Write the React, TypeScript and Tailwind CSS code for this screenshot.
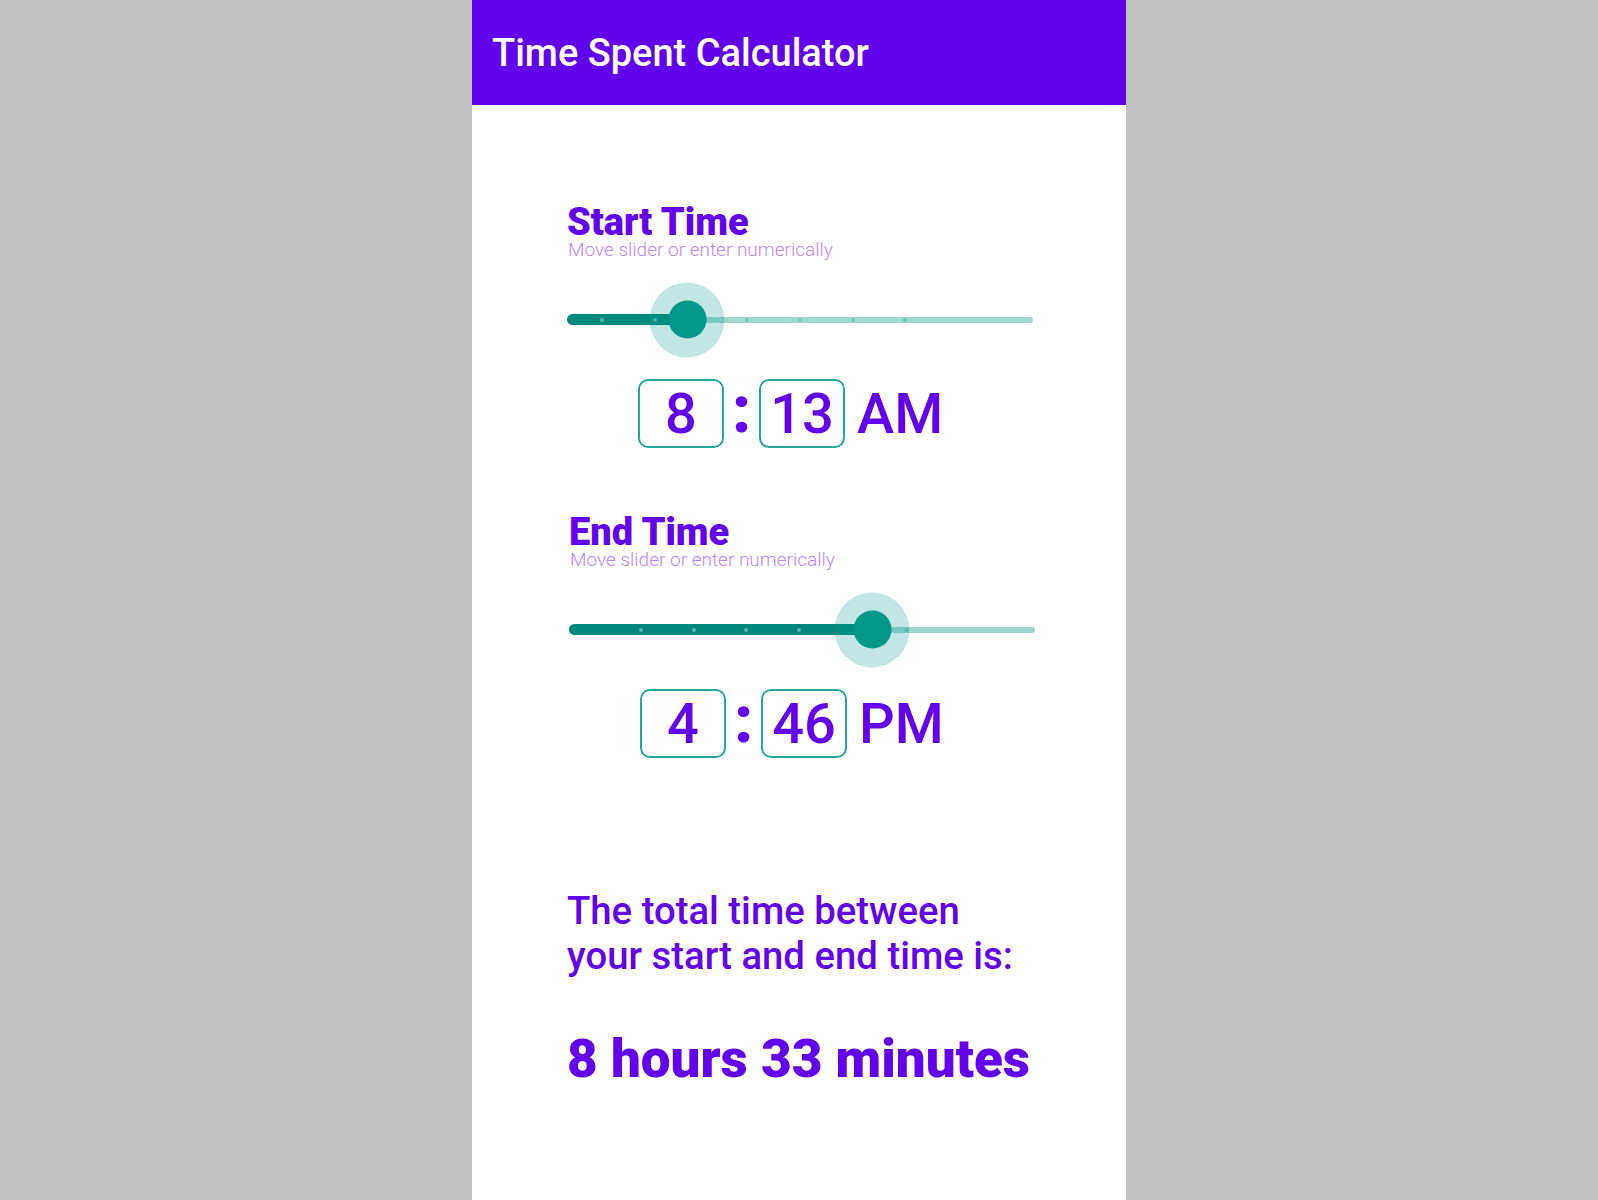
import React from 'react';

type SliderProps = {
  thumb: number; // px from track start
  activeDots: number[];
  inactiveDots: number[];
};

const Slider: React.FC<SliderProps> = ({ thumb, activeDots, inactiveDots }) => {
  return (
    <div className="relative h-[75px] w-[466px] flex items-center">
      {/* track */}
      <div className="flex items-center w-full">
        <div className="h-[11px] bg-[#00897b] rounded-l-full" style={{ width: thumb }}></div>
        <div className="h-[6px] flex-1 bg-[rgba(0,150,136,0.38)] rounded-r-full"></div>
      </div>

      {/* tick marks */}
      {activeDots.map((d) => (
        <div
          key={'a' + d}
          className="absolute top-1/2 -translate-y-1/2 -translate-x-1/2 w-[4px] h-[4px] rounded-full bg-[#62b6ad]"
          style={{ left: d }}
        ></div>
      ))}
      {inactiveDots.map((d) => (
        <div
          key={'i' + d}
          className="absolute top-1/2 -translate-y-1/2 -translate-x-1/2 w-[4px] h-[4px] rounded-full bg-[#6cc3bb]"
          style={{ left: d }}
        ></div>
      ))}

      {/* halo + thumb */}
      <div
        className="absolute top-1/2 -translate-y-1/2 -translate-x-1/2 w-[75px] h-[75px] rounded-full bg-[rgba(0,150,136,0.24)] flex items-center justify-center"
        style={{ left: thumb }}
      >
        <div className="w-[38px] h-[38px] rounded-full bg-[#009688]"></div>
      </div>
    </div>
  );
};

const TimeBox: React.FC<{ value: string }> = ({ value }) => (
  <div className="w-[86px] h-[69px] border-2 border-[#26a69a] rounded-[10px] flex items-center justify-center">
    <span className="text-[56px] leading-none font-medium text-[#6200ee]">{value}</span>
  </div>
);

const TimeSection: React.FC<{
  title: string;
  hour: string;
  minute: string;
  period: string;
  slider: SliderProps;
  shift: string;
}> = ({ title, hour, minute, period, slider, shift }) => (
  <div className={'flex flex-col ' + shift}>
    <h2 className="text-[38px] leading-[37px] font-black text-[#6200ee]">{title}</h2>
    <p className="text-[19px] leading-[18px] font-light text-[#bb86fc] ml-[1px]">Move slider or enter numerically</p>

    <div className="mt-[23px]">
      <Slider {...slider} />
    </div>

    <div className="mt-[22px] ml-[71px] flex items-center">
      <TimeBox value={hour} />
      <span className="w-[35px] text-center text-[64px] leading-none font-black text-[#6200ee] -mt-[6px]">:</span>
      <TimeBox value={minute} />
      <span className="ml-[12px] text-[56px] leading-none font-medium text-[#6200ee]">{period}</span>
    </div>
  </div>
);

export default function App() {
  return (
    <div className="min-h-screen bg-[#c2c2c2] flex justify-center font-[Roboto,sans-serif]">
      <div className="w-[654px] min-h-screen bg-white flex flex-col">
        <header className="h-[105px] bg-[#6200ee] flex items-center px-[20px]">
          <h1 className="text-[38px] leading-none font-medium text-white">Time Spent Calculator</h1>
        </header>

        <main className="flex flex-col pl-[95px] pt-[99px]">
          <TimeSection
            title="Start Time"
            hour="8"
            minute="13"
            period="AM"
            shift=""
            slider={{ thumb: 120, activeDots: [35, 88], inactiveDots: [180, 233, 286, 338] }}
          />

          <div className="mt-[66px]">
            <TimeSection
              title="End Time"
              hour="4"
              minute="46"
              period="PM"
              shift="ml-[2px]"
              slider={{ thumb: 303, activeDots: [72, 125, 177, 230], inactiveDots: [338] }}
            />
          </div>

          <p className="mt-[130px] text-[38.3px] leading-[45px] font-medium text-[#6200ee]">
            The total time between
            <br />
            your start and end time is:
          </p>

          <p className="mt-[55px] text-[53px] leading-none font-black text-[#6200ee]">8 hours 33 minutes</p>
        </main>
      </div>
    </div>
  );
}
